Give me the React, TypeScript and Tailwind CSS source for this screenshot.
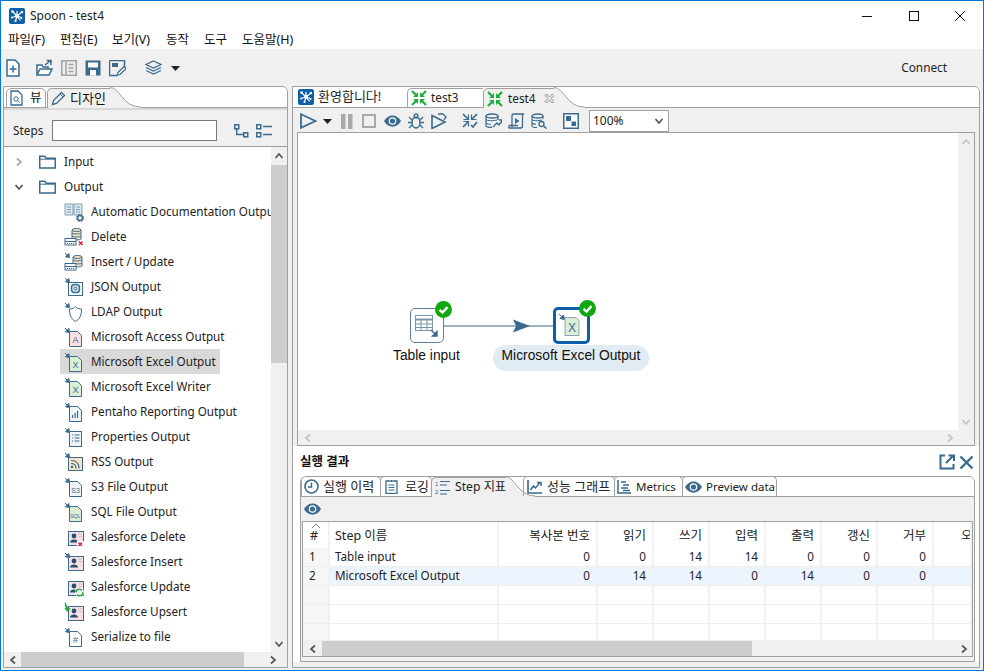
import React from 'react';

const C = '#3a6a8e';
type P = { className?: string };

function Svg({ w, h, children, className }: { w: number; h: number; children: React.ReactNode; className?: string }) {
  return (
    <svg width={w} height={h} viewBox={`0 0 ${w} ${h}`} fill="none" className={`shrink-0 ${className ?? ''}`}>
      {children}
    </svg>
  );
}

function Logo() {
  return (
    <Svg w={16} h={16}>
      <rect width="16" height="16" rx="2" fill="#0f5fa6" />
      <path d="M8 8 3.500 3.500M8 8l5-4M8 8l4.500 1.500M8 8l-1.500 5M8 8 3 9.500M8 8l3.500 4.500M8 8 8 3" stroke="#fff" strokeWidth="1.200" />
      <circle cx="8" cy="8" r="2" fill="#fff" />
      <circle cx="3.500" cy="3.500" r="1.300" fill="#fff" />
      <circle cx="13" cy="4" r="1.200" fill="#fff" />
      <circle cx="3" cy="9.500" r="1" fill="#fff" />
      <circle cx="12.500" cy="10" r="1" fill="#fff" />
      <circle cx="6.500" cy="13" r="1.100" fill="#fff" />
    </Svg>
  );
}

function Merge() {
  return (
    <Svg w={16} h={16}>
      <g stroke="#1fae3c" strokeWidth="2.200">
        <path d="M1 1l5 5M15 1l-5 5M1 15l5-5M15 15l-5-5" />
      </g>
      <g fill="#1fae3c">
        <path d="M7 2v5H2zM9 2v5h5zM7 14V9H2zM9 14V9h5z" />
      </g>
    </Svg>
  );
}

function Folder() {
  return (
    <Svg w={17} h={14}>
      <path d="M.75 13V1.200h5l1.500 2h9v9.800z" stroke={C} strokeWidth="1.500" fill="#fff" />
      <path d="M1 4.200h15" stroke={C} strokeWidth="1" />
    </Svg>
  );
}

function ArrowTL({ color = C }: { color?: string }) {
  return <path d="M1 1l4 4M1.500 4.800 5.500 5.500 4.800 1.500z" stroke={color} strokeWidth="1" fill={color} />;
}

function Doc({ tint, label, size = 7 }: { tint: string; label: string; size?: number }) {
  return (
    <Svg w={20} h={20}>
      <ArrowTL />
      <path d="M5.500 4.500h8l4 4v11h-12z" fill={tint} stroke={C} strokeWidth="1" />
      <text x="11.500" y="15.500" textAnchor="middle" fontSize={size} fontFamily="Liberation Sans" fill={C}>{label}</text>
    </Svg>
  );
}

function Db({ x = 8, y = 1 }: { x?: number; y?: number }) {
  return (
    <g transform={`translate(${x} ${y})`}>
      <path d="M0 2v9c0 1.200 9 1.200 9 0V2" fill="#f7e2c0" stroke={C} />
      <ellipse cx="4.500" cy="2" rx="4.500" ry="1.500" fill="#f7e2c0" stroke={C} />
      <path d="M0 5c0 1.200 9 1.200 9 0M0 8c0 1.200 9 1.200 9 0" stroke={C} />
    </g>
  );
}

function Grid() {
  return (
    <g>
      <rect x="1" y="11.500" width="11" height="6.500" fill="#fff" stroke={C} />
      <path d="M1 14.500h11" stroke={C} />
      <path d="M3 16.500h8" stroke={C} strokeDasharray="1 1" />
    </g>
  );
}

function Sf({ mark }: { mark?: 'x' | 'sync' | 'in' | 'up' }) {
  return (
    <Svg w={20} h={20}>
      <rect x="4.500" y="4.500" width="15" height="14" fill="#fbdfe3" stroke={C} />
      <circle cx="10" cy="9" r="2.400" fill="#24506f" />
      <path d="M6 15.500c0-4 8-4 8 0z" fill="#24506f" />
      <path d="M14 7h4M15 9.500h3" stroke="#b9c6d0" />
      {mark === 'in' && <ArrowTL />}
      {mark === 'up' && <path d="M1.500 .5v3c0 2 1.500 2.500 2.500 2.500M1.500 6.500h4L3.500 9z" stroke="#1fae3c" strokeWidth="1.200" fill="#1fae3c" />}
      {mark === 'x' && (
        <g>
          <rect x="13" y="14" width="7" height="6" fill="#fff" />
          <path d="M14.500 15.500l3.500 3.500M18 15.500l-3.500 3.500" stroke="#e6192e" strokeWidth="1.400" />
        </g>
      )}
      {mark === 'sync' && (
        <g>
          <circle cx="15.500" cy="15.500" r="4.500" fill="#fff" />
          <circle cx="15.500" cy="15.500" r="3.300" stroke="#1fae3c" strokeWidth="1.600" strokeDasharray="8 2" />
        </g>
      )}
    </Svg>
  );
}

const treeIcons: Record<string, React.ReactNode> = {
  auto: (
    <Svg w={20} h={20}>
      <path d="M1 2h8v11H1zM10 2h8v11h-8z" fill="#dfe8ef" stroke="#7f9db4" />
      <path d="M3 5h4M3 7.500h4M3 10h4M12 5h4M12 7.500h4M12 10h4" stroke="#7f9db4" />
      <circle cx="16" cy="16" r="2.500" fill="#fff" stroke={C} strokeWidth="1.500" />
      <circle cx="16" cy="16" r="3.700" stroke={C} strokeWidth="1" strokeDasharray="1.500 1.500" />
    </Svg>
  ),
  del: (
    <Svg w={20} h={20}>
      <Db />
      <Grid />
      <path d="M15 14.500l3.500 3.500M18.500 14.500l-3.500 3.500" stroke="#e6192e" strokeWidth="1.400" />
    </Svg>
  ),
  ins: (
    <Svg w={20} h={20}>
      <ArrowTL />
      <Db x={9} y={3} />
      <Grid />
    </Svg>
  ),
  json: (
    <Svg w={20} h={20}>
      <ArrowTL />
      <rect x="4.500" y="5.500" width="14" height="13" fill="#fff" stroke={C} />
      <rect x="7.500" y="7.500" width="8" height="8" rx="3" fill="#dfe8ef" stroke={C} strokeWidth="1.500" />
      <circle cx="11.500" cy="11.500" r="1.500" stroke={C} />
    </Svg>
  ),
  ldap: (
    <Svg w={20} h={20}>
      <ArrowTL />
      <path d="M5.500 7c4 0 5-1.500 6-2.500 1 1 2 2.500 6 2.500 0 6-1.500 10-6 12.500C7 17 5.500 13 5.500 7z" fill="#fff" stroke={C} />
    </Svg>
  ),
  access: <Doc tint="#fbdfe3" label="A" size={9} />,
  excel: <Doc tint="#dbeed6" label="X" size={9} />,
  report: (
    <Svg w={20} h={20}>
      <ArrowTL />
      <path d="M5.500 4.500h8l4 4v11h-12z" fill="#eef4f9" stroke={C} />
      <path d="M8.500 16v-3M11 16v-5M13.500 16v-7" stroke={C} strokeWidth="1.200" />
    </Svg>
  ),
  props: (
    <Svg w={20} h={20}>
      <ArrowTL />
      <rect x="5.500" y="4.500" width="12" height="15" fill="#eef4f9" stroke={C} />
      <path d="M8 8h1M8 11h1M8 14h1M10.500 8h5M10.500 11h5M10.500 14h5" stroke={C} />
    </Svg>
  ),
  rss: (
    <Svg w={20} h={20}>
      <ArrowTL />
      <rect x="4.500" y="5.500" width="14" height="13" fill="#f9e3c4" stroke={C} />
      <circle cx="8" cy="15" r="1.300" fill={C} />
      <path d="M7 11.500c3 0 5 2 5 5M7 8.500c5 0 8 3 8 8" stroke={C} strokeWidth="1.200" />
    </Svg>
  ),
  s3: <Doc tint="#eef4f9" label="S3" size={7} />,
  sql: <Doc tint="#dbeed6" label="SQL" size={5} />,
  ser: <Doc tint="#fff" label="#" size={9} />,
  sfd: <Sf mark="x" />,
  sfi: <Sf mark="in" />,
  sfu: <Sf mark="sync" />,
  sfs: <Sf mark="up" />,
};

const items: [string, string][] = [
  ['auto', 'Automatic Documentation Output'],
  ['del', 'Delete'],
  ['ins', 'Insert / Update'],
  ['json', 'JSON Output'],
  ['ldap', 'LDAP Output'],
  ['access', 'Microsoft Access Output'],
  ['excel', 'Microsoft Excel Output'],
  ['excel', 'Microsoft Excel Writer'],
  ['report', 'Pentaho Reporting Output'],
  ['props', 'Properties Output'],
  ['rss', 'RSS Output'],
  ['s3', 'S3 File Output'],
  ['sql', 'SQL File Output'],
  ['sfd', 'Salesforce Delete'],
  ['sfi', 'Salesforce Insert'],
  ['sfu', 'Salesforce Update'],
  ['sfs', 'Salesforce Upsert'],
  ['ser', 'Serialize to file'],
];

function Chevron({ dir, color = '#555' }: { dir: 'l' | 'r' | 'u' | 'd'; color?: string }) {
  const d = { l: 'M7 1.500 3 5l4 3.500', r: 'M3 1.500 7 5 3 8.500', u: 'M1.500 7 5 3l3.500 4', d: 'M1.500 3 5 7l3.500-4' }[dir];
  return (
    <Svg w={10} h={10}>
      <path d={d} stroke={color} strokeWidth="1.700" />
    </Svg>
  );
}

function CurveEnd() {
  return (
    <svg width="30" height="21" viewBox="0 0 30 21" className="shrink-0 -mb-px -ml-px" fill="none">
      <path d="M0 1C10 1 13 20 30 20V21H0z" fill="#f0f0f0" />
      <path d="M0 .5c10 0 13 19.500 30 19.500" stroke="#a0a0a0" />
    </svg>
  );
}

function Check({ className }: P) {
  return (
    <svg width="17" height="17" viewBox="0 0 17 17" className={className}>
      <circle cx="8.500" cy="8.500" r="8.500" fill="#0fa80f" />
      <path d="M4.500 8.800l3 2.800 5-5.500" stroke="#fff" strokeWidth="2.400" fill="none" />
    </svg>
  );
}

const Caret = () => (
  <Svg w={9} h={5}>
    <path d="M0 0h9L4.500 5z" fill="#222" />
  </Svg>
);

function MainToolbar() {
  return (
    <div className="h-[36px] flex items-center pl-[5px] pt-[2px] bg-[#f0f0f0]">
      <Svg w={14} h={18}>
        <path d="M1 1h8l4 4v12H1z" stroke={C} strokeWidth="1.500" fill="#fff" />
        <path d="M7 6.500v7M3.500 10h7" stroke={C} strokeWidth="1.500" />
      </Svg>
      <Svg w={17} h={18} className="ml-[16px]">
        <path d="M1 16V6h5l1 2h5v2M1 16l3-6h12l-3 6z" stroke={C} strokeWidth="1.500" fill="#fff" />
        <path d="M9 6l5-4M10.500 1.500H15V6" stroke={C} strokeWidth="1.500" />
      </Svg>
      <Svg w={16} h={16} className="ml-[8px]">
        <rect x=".75" y=".75" width="14.500" height="14.500" fill="#eee" stroke="#a3a3a3" strokeWidth="1.500" />
        <path d="M5 1v14M7.500 4.500h5M7.500 8h5M7.500 11.500h5" stroke="#a3a3a3" strokeWidth="1.500" />
      </Svg>
      <Svg w={16} h={16} className="ml-[8px]">
        <path d="M.5.500h15v15H.5z" fill={C} />
        <path d="M3 2.500h10v5H3z" fill="#fff" />
        <path d="M5 10h6v5.500H5z" fill="#fff" />
      </Svg>
      <Svg w={17} h={17} className="ml-[8px]">
        <path d="M.5.500h15v8M.5.500v15h7" stroke={C} strokeWidth="1.500" />
        <path d="M3 3h6v4H3z" fill={C} />
        <path d="M8 15.500l1-3 6-6 2 2-6 6z" fill="#fff" stroke={C} strokeWidth="1.300" />
      </Svg>
      <Svg w={17} h={16} className="ml-[19px]">
        <path d="M8.500 1 16 4.500 8.500 8 1 4.500z" stroke={C} strokeWidth="1.200" />
        <path d="M1 7.500 8.500 11 16 7.500M1 10.500 8.500 14 16 10.500" stroke={C} strokeWidth="1.200" />
      </Svg>
      <span className="ml-[9px]">
        <Caret />
      </span>
      <span className="ml-auto mr-[36px] text-[11.800px] text-[#222]">Connect</span>
    </div>
  );
}

function Menu() {
  return (
    <div className="h-[19px] bg-white flex items-center pt-px text-[12.500px] text-[#111]">
      <span className="ml-[7px] w-[52px]">파일(F)</span>
      <span className="w-[52px]">편집(E)</span>
      <span className="w-[54px]">보기(V)</span>
      <span className="w-[38px]">동작</span>
      <span className="w-[38px]">도구</span>
      <span>도움말(H)</span>
    </div>
  );
}

function Title() {
  return (
    <div className="h-[29px] bg-white flex items-center text-[12px] text-[#222]">
      <span className="ml-[8px] mr-[5px]">
        <Logo />
      </span>
      <span>Spoon - test4</span>
      <div className="ml-auto flex items-center">
        <Svg w={46} h={29}>
          <path d="M17 15.500h10" stroke="#111" />
        </Svg>
        <Svg w={46} h={29}>
          <rect x="18.500" y="10.500" width="9" height="9" stroke="#111" />
        </Svg>
        <Svg w={46} h={29}>
          <path d="M18 10l10 10M28 10 18 20" stroke="#111" />
        </Svg>
      </div>
    </div>
  );
}

function VScroll({ thumb, arrowColor }: { thumb?: boolean; arrowColor: string }) {
  return (
    <div className="w-[16px] bg-[#f0f0f0] flex flex-col items-center">
      <div className="h-[18px] flex items-center justify-center shrink-0">
        <Chevron dir="u" color={arrowColor} />
      </div>
      <div className="flex-1 w-full">{thumb && <div className="h-[198px] bg-[#cdcdcd]" />}</div>
      <div className="h-[16px] flex items-center justify-center shrink-0">
        <Chevron dir="d" color={arrowColor} />
      </div>
    </div>
  );
}

function LeftPanel() {
  return (
    <div className="w-[285px] flex flex-col border border-[#a0a0a0] rounded-tr-[6px] overflow-hidden">
      <div className="h-[21px] bg-white flex items-end border-b border-[#a0a0a0] pl-[2px] shrink-0">
        <div className="h-[20px] w-[40px] flex items-center border-x border-t border-[#a0a0a0] rounded-t-[5px] -mb-px bg-white border-b">
          <Svg w={13} h={16} className="ml-[3px]">
            <path d="M1 1h7l4 4v10H1z" stroke={C} strokeWidth="1.300" />
            <circle cx="6" cy="9" r="2.200" stroke={C} />
            <path d="M7.500 10.500l2 2" stroke={C} />
          </Svg>
          <span className="ml-[7px] text-[12.500px] text-[#111]">뷰</span>
        </div>
        <div className="h-[20px] -mb-px flex items-center pl-[3px] bg-[#f0f0f0] border-t border-l border-[#a0a0a0] rounded-tl-[5px] ml-px">
          <Svg w={15} h={15}>
            <path d="M1.500 13.500l1-4 8-8 3 3-8 8z" stroke={C} strokeWidth="1.300" />
            <path d="M9 3l3 3" stroke={C} />
          </Svg>
          <span className="ml-[4px] pr-[5px] text-[13px] text-[#111]">디자인</span>
        </div>
        <CurveEnd />
      </div>
      <div className="h-[39px] bg-[#f0f0f0] flex items-center pt-[5px] border-t-2 border-b border-t-[#d8d8d8] border-b-[#a0a0a0] shrink-0">
        <span className="ml-[9px] text-[11.800px] text-[#222]">Steps</span>
        <div className="ml-[9px] w-[165px] h-[21px] bg-white border border-[#7a7a7a]" />
        <Svg w={15} h={14} className="ml-[17px]">
          <rect x=".75" y=".75" width="4" height="4" stroke={C} strokeWidth="1.500" />
          <rect x="9.750" y="8.750" width="4" height="4" stroke={C} strokeWidth="1.500" />
          <path d="M2.700 5v5.500h7" stroke={C} strokeWidth="1.500" />
        </Svg>
        <Svg w={17} h={14} className="ml-[7px]">
          <rect x=".75" y=".75" width="4" height="4" stroke={C} strokeWidth="1.500" />
          <rect x=".75" y="8.750" width="4" height="4" stroke={C} strokeWidth="1.500" />
          <path d="M7 2.500h9M7 10.500h9" stroke={C} strokeWidth="1.500" />
        </Svg>
      </div>
      <div className="flex-1 flex min-h-0 bg-white">
        <div className="flex-1 min-w-0 overflow-hidden pt-[2px] text-[11.700px] text-[#222]">
          <div className="h-[25px] flex items-center whitespace-nowrap">
            <span className="ml-[10px] w-[25px]">
              <Chevron dir="r" color="#aaa" />
            </span>
            <Folder />
            <span className="ml-[8px]">Input</span>
          </div>
          <div className="h-[25px] flex items-center whitespace-nowrap">
            <span className="ml-[10px] w-[25px]">
              <Chevron dir="d" color="#555" />
            </span>
            <Folder />
            <span className="ml-[8px]">Output</span>
          </div>
          {items.map(([ic, t]) => (
            <div key={t} className="h-[25px] flex items-center whitespace-nowrap pl-[56px]">
              <div className={`flex items-center h-full pl-[4px] pr-[4px] ${t === 'Microsoft Excel Output' ? 'bg-[#d9d9d9]' : ''}`}>
                {treeIcons[ic]}
                <span className="ml-[7px]">{t}</span>
              </div>
            </div>
          ))}
        </div>
        <VScroll thumb arrowColor="#555" />
      </div>
      <div className="h-[15px] bg-[#f0f0f0] flex items-center shrink-0">
        <div className="w-[17px] flex justify-center">
          <Chevron dir="l" />
        </div>
        <div className="w-[223px] h-full bg-[#cdcdcd]" />
        <div className="ml-auto w-[40px] flex justify-center pl-[12px]">
          <Chevron dir="r" />
        </div>
      </div>
    </div>
  );
}

function RunToolbar() {
  return (
    <div className="h-[24px] bg-[#f0f0f0] flex items-center pl-[7px] pt-[2px] shrink-0">
      <Svg w={17} h={16}>
        <path d="M1 1.200 15.500 8 1 14.800z" stroke={C} strokeWidth="1.800" />
      </Svg>
      <span className="ml-[6px]">
        <Caret />
      </span>
      <Svg w={12} h={15} className="ml-[9px]">
        <path d="M0 0h4.500v15H0zM7 0h4.500v15H7z" fill="#a9a9a9" />
      </Svg>
      <Svg w={14} h={14} className="ml-[9px]">
        <rect x="1" y="1" width="12" height="12" stroke="#a9a9a9" strokeWidth="2" />
      </Svg>
      <Svg w={17} h={12} className="ml-[8px]">
        <path d="M0 6c4-7.500 13-7.500 17 0-4 7.500-13 7.500-17 0z" fill={C} />
        <circle cx="8.500" cy="6" r="3.800" fill="#fff" />
        <circle cx="8.500" cy="6" r="2.600" fill={C} />
      </Svg>
      <Svg w={16} h={16} className="ml-[7px]">
        <ellipse cx="8" cy="9.500" rx="4" ry="5.500" stroke={C} strokeWidth="1.500" />
        <circle cx="8" cy="3" r="2" stroke={C} strokeWidth="1.300" />
        <path d="M1 4l3 3M15 4l-3 3M0 9.500h4M16 9.500h-4M1 15l3-3M15 15l-3-3" stroke={C} strokeWidth="1.300" />
      </Svg>
      <Svg w={17} h={16} className="ml-[7px]">
        <path d="M1 2.500 14 9 1 15.500z" stroke={C} strokeWidth="1.600" />
        <path d="M7 1h5l3 3-2 3" stroke={C} strokeWidth="1.300" />
      </Svg>
      <Svg w={16} h={16} className="ml-[14px]">
        <path d="M1 1l5 5M15 1l-5 5M1 14l5-5M9 12l2 2 4-5" stroke={C} strokeWidth="1.700" />
        <path d="M6.500 1.500v5h-5M9.500 1.500v5h5M6.500 13.500v-5h-5" stroke={C} strokeWidth="1.200" />
      </Svg>
      <Svg w={17} h={16} className="ml-[7px]">
        <path d="M1 3v10c0 1 4 1.700 6 1.200M13 7V3" stroke={C} strokeWidth="1.300" />
        <ellipse cx="7" cy="3" rx="6" ry="2" stroke={C} strokeWidth="1.300" />
        <path d="M1 6.500c1 1.500 8 1.500 11 .5M1 10c1 1 3 1.300 5 1.300" stroke={C} />
        <path d="M8 14l4-4 2 2 3-4M14 7h3v3" stroke={C} strokeWidth="1.300" />
      </Svg>
      <Svg w={17} h={16} className="ml-[6px]">
        <path d="M4 14V2.500C4 1 5 1 6 1h10c-1 0-1.500 1-1.500 2v10c0 1.500-1 2-2 2H1.500c-1 0-1-2 0-2.500H10" stroke={C} strokeWidth="1.300" />
        <path d="M7 5v6l4.500-3z" fill={C} />
      </Svg>
      <Svg w={17} h={16} className="ml-[6px]">
        <ellipse cx="6.500" cy="3" rx="5.500" ry="2" stroke={C} strokeWidth="1.300" />
        <path d="M1 3v10c0 1 3 1.500 5 1.500M12 3v3M1 6.500c1 1.500 7 1.500 10 .5M1 10c1 1 3 1.300 4 1.300" stroke={C} strokeWidth="1.100" />
        <circle cx="10.500" cy="11" r="2.500" stroke={C} strokeWidth="1.300" />
        <path d="M12.500 13l3 2.500" stroke={C} strokeWidth="1.600" />
      </Svg>
      <Svg w={16} h={16} className="ml-[15px]">
        <rect x=".75" y=".75" width="14.500" height="14.500" fill="#fff" stroke={C} strokeWidth="1.500" />
        <rect x="3" y="3" width="5" height="5" fill={C} />
        <rect x="8.500" y="8.500" width="4.500" height="4.500" fill={C} />
      </Svg>
      <div className="ml-[10px] w-[80px] h-[22px] bg-white border border-[#a0a0a0] flex items-center pl-[3px] text-[12px] text-[#222]">
        100%
        <span className="ml-auto mr-[4px] flex">
          <Chevron dir="d" color="#555" />
        </span>
      </div>
    </div>
  );
}

function Canvas() {
  return (
    <div className="h-[314px] border border-[#a0a0a0] bg-white flex flex-col mx-[4px] shrink-0">
      <div className="flex-1 flex min-h-0">
        <div className="relative flex-1 min-w-0">
          <svg width="120" height="20" viewBox="0 0 120 20" className="absolute left-[146px] top-[183px]">
            <path d="M0 10h110" stroke={C} strokeWidth="1.200" />
            <path d="M69 3.500 86 10 69 16.500 72 10z" fill={C} />
          </svg>
          <div className="absolute left-[112px] top-[175px] w-[34px] h-[35px] rounded-[5px] border border-[#5b7f9a] bg-white flex items-center justify-center">
            <Svg w={26} h={26}>
              <rect x="1.500" y="2.500" width="17" height="15" fill="#fff" stroke="#7a96aa" />
              <path d="M1.500 6.500h17" stroke="#7a96aa" strokeWidth="2" />
              <path d="M1.500 11h17M1.500 14.500h17M7 6v11M13 6v11" stroke="#7a96aa" />
              <path d="M17 17l6 6M23 18.500V23h-4.500z" stroke={C} strokeWidth="1.400" fill={C} />
            </Svg>
          </div>
          <Check className="absolute left-[137px] top-[168px]" />
          <span className="absolute left-[95px] top-[215px] text-[13.800px] leading-[16px] text-[#111] font-['Liberation_Sans',sans-serif]">Table input</span>
          <div className="absolute left-[255px] top-[174px] w-[37px] h-[37px] rounded-[5px] border-[3px] border-[#0b5ea8] bg-white flex items-center justify-center">
            <Svg w={27} h={26}>
              <path d="M1 1l5 5M2 5.500 6.500 6.500 5.500 2z" stroke={C} strokeWidth="1" fill={C} />
              <path d="M7 4.500h11l3 3v15H7z" fill="#dbeed6" stroke="#8aa4b6" />
              <text x="14" y="18.500" textAnchor="middle" fontSize="12" fontFamily="Liberation Sans" fill={C}>X</text>
            </Svg>
          </div>
          <Check className="absolute left-[281px] top-[167px]" />
          <div className="absolute left-[195px] top-[212px] w-[156px] h-[26px] rounded-[13px] bg-[#e1ebf4] flex items-center justify-center pb-[3px] text-[13.800px] text-[#111] font-['Liberation_Sans',sans-serif]">
            Microsoft Excel Output
          </div>
        </div>
        <VScroll arrowColor="#c4c4c4" />
      </div>
      <div className="h-[15px] bg-[#f0f0f0] flex items-center justify-between pl-[5px] pr-[19px] shrink-0">
        <Chevron dir="l" color="#c4c4c4" />
        <Chevron dir="r" color="#c4c4c4" />
      </div>
    </div>
  );
}

function ResTab({ icon, label, w, ko }: { icon: React.ReactNode; label: string; w: string; ko?: boolean }) {
  return (
    <div className={`h-[20px] flex items-center border border-[#a0a0a0] rounded-t-[5px] -mr-px pl-[2px] whitespace-nowrap text-[#222] border-b-0 ${ko ? 'text-[13px]' : 'text-[11.500px]'} ${w}`}>
      {icon}
      <span className="ml-[4px]">{label}</span>
    </div>
  );
}

const cols = 'grid grid-cols-[27px_169px_99px_56px_56px_56px_56px_56px_56px_1fr]';
const heads = ['#', 'Step 이름', '복사본 번호', '읽기', '쓰기', '입력', '출력', '갱신', '거부', '오'];
const rows: string[][] = [
  ['1', 'Table input', '0', '0', '14', '14', '0', '0', '0', ''],
  ['2', 'Microsoft Excel Output', '0', '14', '14', '0', '14', '0', '0', ''],
  ['', '', '', '', '', '', '', '', '', ''],
  ['', '', '', '', '', '', '', '', '', ''],
  ['', '', '', '', '', '', '', '', '', ''],
];

function Table() {
  return (
    <div className="h-[136px] ml-px mr-px border border-[#a0a0a0] bg-white flex flex-col overflow-hidden text-[11.700px] text-[#222] shrink-0">
      <div className={`${cols} h-[26px] shrink-0 text-[12.500px]`}>
        {heads.map((h, i) => (
          <div
            key={h}
            className={`relative flex items-center pt-[3px] whitespace-nowrap overflow-hidden border-r-2 border-[#f3f3f3] ${i === 0 ? 'justify-center pr-[3px]' : i === 1 ? 'pl-[5px]' : i === 9 ? 'pl-[27px]' : 'justify-end pr-[6px]'}`}
          >
            {i === 0 && (
              <svg width="10" height="6" viewBox="0 0 10 6" className="absolute top-[1px] left-[8px]">
                <path d="M1 5 5 1l4 4" stroke="#888" fill="none" />
              </svg>
            )}
            {h}
          </div>
        ))}
      </div>
      {rows.map((r, ri) => (
        <div key={ri} className={`${cols} ${ri === 4 ? 'h-[17px]' : 'h-[19px]'} shrink-0 border-b border-[#eeeeee] ${ri === 1 ? 'bg-[#ecf5fd]' : ''}`}>
          {r.map((c, i) => (
            <div
              key={i}
              className={`flex items-center border-r-2 border-[#eef2f8] whitespace-nowrap ${i === 0 ? 'pl-[6px] bg-[#f6f6f6]' : i === 1 ? 'pl-[5px]' : 'justify-end pr-[6px]'}`}
            >
              {c}
            </div>
          ))}
        </div>
      ))}
      <div className="flex-1 bg-[#f0f0f0] flex items-center min-h-0">
        <div className="w-[19px] flex justify-center">
          <Chevron dir="l" />
        </div>
        <div className="w-[430px] h-full bg-[#cdcdcd]" />
        <div className="ml-auto mr-[3px] flex">
          <Chevron dir="r" />
        </div>
      </div>
    </div>
  );
}

const Eye = ({ className }: P) => (
  <Svg w={17} h={12} className={className}>
    <path d="M0 6c4-7.500 13-7.500 17 0-4 7.500-13 7.500-17 0z" fill={C} />
    <circle cx="8.500" cy="6" r="3.800" fill="#fff" />
    <circle cx="8.500" cy="6" r="2.600" fill={C} />
  </Svg>
);

function Results() {
  return (
    <div className="flex-1 flex flex-col bg-white min-h-0 mb-[5px]">
      <div className="h-[30px] flex items-center pl-[7px] pt-[2px] shrink-0">
        <span className="text-[12.500px] font-bold text-[#111]">실행 결과</span>
        <Svg w={16} h={16} className="ml-auto mr-[4px]">
          <path d="M6 1.500H1.500v13h13V10" stroke={C} strokeWidth="2" />
          <path d="M7 9l7-7M9.500 1.500H15V7" stroke={C} strokeWidth="2" />
        </Svg>
        <Svg w={15} h={15} className="mr-[5px]">
          <path d="M1.500 1.500l12 12M13.500 1.500l-12 12" stroke={C} strokeWidth="2.400" />
        </Svg>
      </div>
      <div className="ml-[7px] mr-[4px] border border-[#a0a0a0] rounded-t-[6px] flex flex-col flex-1 min-h-0 overflow-hidden bg-[#f0f0f0]">
        <div className="h-[20px] bg-white flex items-end border-b border-[#a0a0a0] shrink-0">
          <ResTab
            w="w-[80px]"
            ko
            label="실행 이력"
            icon={
              <Svg w={15} h={15}>
                <circle cx="7.500" cy="7.500" r="6.500" stroke={C} strokeWidth="1.600" />
                <path d="M7.500 3.500v4.500H4" stroke={C} strokeWidth="1.400" />
              </Svg>
            }
          />
          <ResTab
            w="w-[52px]"
            ko
            label="로깅"
            icon={
              <Svg w={14} h={15} className="ml-[2px] mr-[2px]">
                <rect x="1" y="2" width="11" height="12.500" stroke={C} strokeWidth="1.300" />
                <path d="M3 1v2M6.500 1v2M10 1v2M3.500 6h6M3.500 8.500h6M3.500 11h6" stroke={C} />
              </Svg>
            }
          />
          <div className="h-[20px] -mb-px flex items-center bg-[#f0f0f0] border-t border-l border-[#a0a0a0] rounded-tl-[5px] text-[12.200px] text-[#222] whitespace-nowrap z-10">
            <Svg w={16} h={16} className="ml-[3px]">
              <text x="0" y="6" fontSize="6" fontFamily="Liberation Sans" fill={C}>1</text>
              <text x="0" y="14" fontSize="6" fontFamily="Liberation Sans" fill={C}>2</text>
              <path d="M5 1.500h10M5 5h7M5 10.500h10M5 14h7" stroke={C} strokeWidth="1.200" />
            </Svg>
            <span className="ml-[4px]">Step 지표</span>
          </div>
          <CurveEnd />
          <div className="-ml-[12px] z-0 flex items-end">
            <ResTab
              w="w-[92px]"
              ko
              label="성능 그래프"
              icon={
                <Svg w={16} h={15} className="ml-px">
                  <path d="M1 1v13h14" stroke={C} strokeWidth="1.600" />
                  <path d="M3.500 11l3-4 2 2 4-5M10 3.500h4V7" stroke={C} strokeWidth="1.500" />
                </Svg>
              }
            />
            <ResTab
              w="w-[69px]"
              label="Metrics"
              icon={
                <Svg w={15} h={15}>
                  <path d="M1 1v13h13" stroke={C} strokeWidth="1.500" />
                  <path d="M4 3h5M6 6h6M4 9h7M6 11.500h7" stroke={C} strokeWidth="1.500" />
                </Svg>
              }
            />
            <ResTab w="w-[95px]" label="Preview data" icon={<Eye />} />
          </div>
        </div>
        <div className="h-[24px] flex items-center pl-[3px] shrink-0">
          <Eye />
        </div>
        <Table />
      </div>
    </div>
  );
}

function RightPanel() {
  return (
    <div className="w-[688px] flex flex-col border border-[#a0a0a0] rounded-tr-[6px] overflow-hidden bg-[#f0f0f0]">
      <div className="h-[21px] bg-white flex items-end border-b border-[#a0a0a0] pl-[3px] shrink-0 text-[11.800px] text-[#222]">
        <div className="h-[20px] w-[111px] flex items-center pl-[2px]">
          <Logo />
          <span className="ml-[4px] text-[13px]">환영합니다!</span>
        </div>
        <div className="h-[20px] w-[76px] flex items-center border-l border-t border-[#a0a0a0] rounded-tl-[5px] pl-[3px] -mb-px border-b">
          <Merge />
          <span className="ml-[4px]">test3</span>
        </div>
        <div className="h-[20px] flex items-center bg-[#f0f0f0] border-l border-t border-[#a0a0a0] rounded-tl-[5px] pl-[3px] -mb-px">
          <Merge />
          <span className="ml-[5px]">test4</span>
          <svg width="11" height="11" viewBox="0 0 11 11" className="ml-[8px]" fill="none">
            <path d="M1 2.500 2.500 1 5.500 4l3-3L10 2.500l-3 3 3 3L8.500 10l-3-3-3 3L1 8.500l3-3z" stroke="#888" />
          </svg>
        </div>
        <CurveEnd />
      </div>
      <RunToolbar />
      <Canvas />
      <Results />
    </div>
  );
}

export default function App() {
  return (
    <div className="w-[984px] h-[671px] border border-[#0078d7] bg-[#f0f0f0] flex flex-col overflow-hidden font-['Noto_Sans','Noto_Sans_CJK_KR',sans-serif]">
      <Title />
      <Menu />
      <MainToolbar />
      <div className="flex-1 min-h-0 flex gap-[4px] pl-[2px] pt-px pb-[2px]">
        <LeftPanel />
        <RightPanel />
      </div>
    </div>
  );
}
